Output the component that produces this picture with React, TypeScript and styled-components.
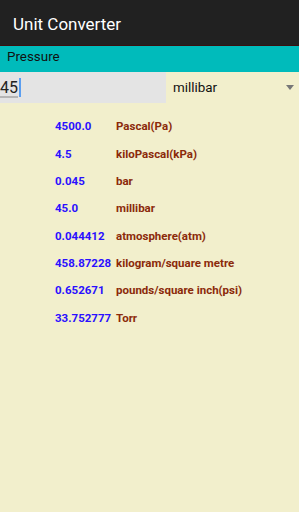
import React from "react";
import styled, { createGlobalStyle } from "styled-components";

const Global = createGlobalStyle`
  html, body { margin: 0; padding: 0; }
  body { background: #f2efcc; font-family: Roboto, "Noto Sans", sans-serif; }
`;

const Screen = styled.div`
  width: 299px;
  height: 512px;
  background: #f2efcc;
  display: flex;
  flex-direction: column;
  overflow: hidden;
`;

const AppBar = styled.div`
  height: 46px;
  background: #212121;
  border-bottom: 1px solid #3a1010;
  display: flex;
  align-items: center;
  padding: 2px 0 0 13px;
  color: #ffffff;
  font-size: 17px;
  box-sizing: border-box;
`;

const Category = styled.div`
  height: 26px;
  background: #00bbbb;
  display: flex;
  align-items: center;
  padding: 0 0 5px 7px;
  box-sizing: border-box;
  color: #111;
  font-size: 13.4px;
`;

const InputRow = styled.div`
  display: flex;
  height: 31px;
`;

const Field = styled.div`
  width: 166px;
  background: #e4e4e4;
  display: flex;
  align-items: center;
  font-size: 16px;
  color: #222;
`;

const Value = styled.span`
  border-bottom: 2px solid #b5b5b5;
  line-height: 17px;
  margin-top: 1px;
`;

const Caret = styled.span`
  display: inline-block;
  width: 2px;
  height: 19px;
  background: #5b9ef0;
  margin-left: 1px;
`;

const Spinner = styled.div`
  flex: 1;
  display: flex;
  align-items: center;
  justify-content: space-between;
  padding-left: 7px;
  padding-right: 5px;
  font-size: 13.4px;
  color: #111;
`;

const Arrow = styled.svg`
  width: 8px;
  height: 5px;
  margin-top: -1px;
`;

const List = styled.div`
  display: flex;
  flex-direction: column;
  padding-top: 9.6px;
`;

const Row = styled.div`
  display: grid;
  grid-template-columns: 61px auto;
  padding-left: 55px;
  height: 27.35px;
  align-items: center;
  font-size: 11.5px;
  font-weight: bold;
`;

const Num = styled.span`
  color: #2a10ff;
`;

const Unit = styled.span`
  color: #8b2a0a;
`;

const rows: [string, string][] = [
  ["4500.0", "Pascal(Pa)"],
  ["4.5", "kiloPascal(kPa)"],
  ["0.045", "bar"],
  ["45.0", "millibar"],
  ["0.044412", "atmosphere(atm)"],
  ["458.87228", "kilogram/square metre"],
  ["0.652671", "pounds/square inch(psi)"],
  ["33.752777", "Torr"],
];

export default function App() {
  return (
    <Screen>
      <Global />
      <AppBar>Unit Converter</AppBar>
      <Category>Pressure</Category>
      <InputRow>
        <Field>
          <Value>45</Value>
          <Caret />
        </Field>
        <Spinner>
          <span>millibar</span>
          <Arrow viewBox="0 0 8 5">
            <polygon points="0,0 8,0 4,5" fill="#777" />
          </Arrow>
        </Spinner>
      </InputRow>
      <List>
        {rows.map(([n, u]) => (
          <Row key={u}>
            <Num>{n}</Num>
            <Unit>{u}</Unit>
          </Row>
        ))}
      </List>
    </Screen>
  );
}
